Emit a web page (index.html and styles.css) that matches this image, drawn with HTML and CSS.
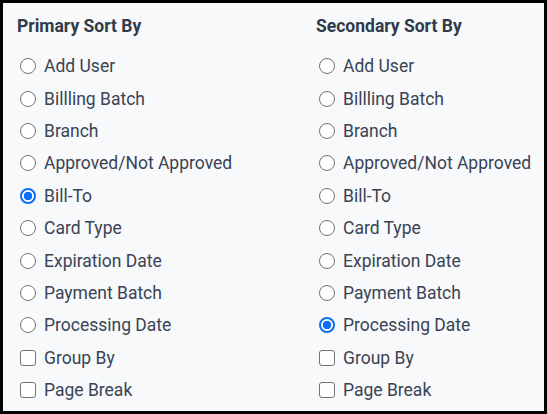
FILE: index.html
```html
<!DOCTYPE html>
<html>
<head>
    <title>Sort Options</title>
    <link rel="stylesheet" href="styles.css">
</head>
<body>
<div class="panel">
    <div class="sort-group">
        <h3>Primary Sort By</h3>
        <label class="opt"><input type="radio" name="primary"> Add User</label>
        <label class="opt"><input type="radio" name="primary"> Billling Batch</label>
        <label class="opt"><input type="radio" name="primary"> Branch</label>
        <label class="opt"><input type="radio" name="primary"> Approved/Not Approved</label>
        <label class="opt"><input type="radio" name="primary" checked> Bill-To</label>
        <label class="opt"><input type="radio" name="primary"> Card Type</label>
        <label class="opt"><input type="radio" name="primary"> Expiration Date</label>
        <label class="opt"><input type="radio" name="primary"> Payment Batch</label>
        <label class="opt"><input type="radio" name="primary"> Processing Date</label>
        <label class="opt"><input type="checkbox"> Group By</label>
        <label class="opt"><input type="checkbox"> Page Break</label>
    </div>
    <div class="sort-group">
        <h3>Secondary Sort By</h3>
        <label class="opt"><input type="radio" name="secondary"> Add User</label>
        <label class="opt"><input type="radio" name="secondary"> Billling Batch</label>
        <label class="opt"><input type="radio" name="secondary"> Branch</label>
        <label class="opt"><input type="radio" name="secondary"> Approved/Not Approved</label>
        <label class="opt"><input type="radio" name="secondary"> Bill-To</label>
        <label class="opt"><input type="radio" name="secondary"> Card Type</label>
        <label class="opt"><input type="radio" name="secondary"> Expiration Date</label>
        <label class="opt"><input type="radio" name="secondary"> Payment Batch</label>
        <label class="opt"><input type="radio" name="secondary" checked> Processing Date</label>
        <label class="opt"><input type="checkbox"> Group By</label>
        <label class="opt"><input type="checkbox"> Page Break</label>
    </div>
</div>
</body>
</html>
```
FILE: styles.css
```css
body {
    margin: 0;
    background-color: #000;
    font-family: Roboto, "Liberation Sans", sans-serif;
}

.panel {
    box-sizing: border-box;
    width: 541px;
    height: 408px;
    margin: 3px;
    background-color: #f8f9fb;
    display: grid;
    grid-template-columns: 299px 1fr;
    padding: 13px 0 0 14px;
}

.sort-group h3 {
    margin: 0 0 14px 0;
    font-size: 17.5px;
    font-weight: bold;
    line-height: 20px;
    color: #2f3a4a;
}

.opt {
    display: flex;
    align-items: center;
    height: 32.4px;
    font-size: 17.5px;
    color: #3a4354;
    cursor: pointer;
}

.opt input {
    appearance: none;
    margin: 0 8px 0 3px;
    width: 16px;
    height: 16px;
    border: 1.5px solid #737373;
    background-color: #fff;
    box-sizing: border-box;
    flex-shrink: 0;
}

.opt input[type="radio"] {
    border-radius: 50%;
}

.opt input[type="checkbox"] {
    border-radius: 3px;
}

.opt input[type="radio"]:checked {
    border: 2px solid #0b6ffa;
    background: radial-gradient(circle, #0b6ffa 0 4px, #fff 4.5px);
}
```
